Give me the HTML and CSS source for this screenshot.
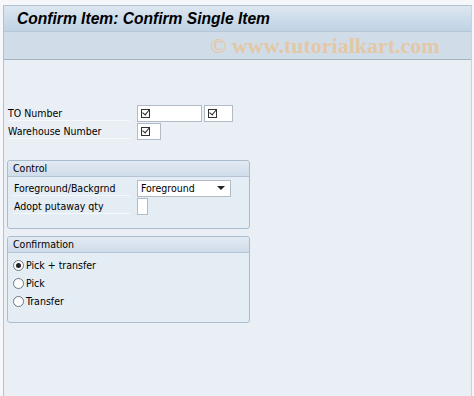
FILE: index.html
```html
<!DOCTYPE html>
<html>
<head>
<meta charset="utf-8">
<link rel="stylesheet" href="styles.css">
</head>
<body>
<div class="window">
  <div class="titlebar">Confirm Item: Confirm Single Item</div>
  <div class="toolbar"><span class="watermark">© www.tutorialkart.com</span></div>
  <div class="content">
    <div class="row">
      <div class="label">TO Number</div>
      <div class="input w64"><span class="chk"></span></div>
      <div class="input w28"><span class="chk"></span></div>
    </div>
    <div class="row">
      <div class="label">Warehouse Number</div>
      <div class="input w23"><span class="chk"></span></div>
    </div>

    <div class="group g1">
      <div class="ghead">Control</div>
      <div class="gbody">
        <div class="row">
          <div class="label glabel">Foreground/Backgrnd</div>
          <div class="select"><span>Foreground</span><span class="arrow"></span></div>
        </div>
        <div class="row">
          <div class="label glabel">Adopt putaway qty</div>
          <div class="input w11"></div>
        </div>
      </div>
    </div>

    <div class="group g2">
      <div class="ghead">Confirmation</div>
      <div class="gbody radios">
        <div class="radio"><span class="dot on"></span>Pick + transfer</div>
        <div class="radio"><span class="dot"></span>Pick</div>
        <div class="radio"><span class="dot"></span>Transfer</div>
      </div>
    </div>
  </div>
</div>
</body>
</html>
```
FILE: styles.css
```css
html, body {
  margin: 0;
  padding: 0;
  background: #f5f7fa;
  font-family: "DejaVu Sans Condensed", "DejaVu Sans", sans-serif;
  font-size: 10.5px;
  color: #000;
}
.window {
  margin: 5px 2px 0 3px;
  height: 391px;
  border-left: 1px solid #b4c1ce;
  border-top: 1px solid #b4c1ce;
  border-right: 1px solid #c8d3de;
  background: #e9eff5;
  display: flex;
  flex-direction: column;
}
.titlebar {
  height: 25px;
  line-height: 25px;
  padding-left: 13px;
  background: linear-gradient(#dde7f1, #bfd2e4);
  font-family: "Liberation Sans", sans-serif;
  font-weight: bold;
  font-style: italic;
  font-size: 15.6px;
  color: #000;
  border-bottom: 1px solid #b7c7d7;
}
.toolbar {
  height: 27px;
  background: #d0dde9;
  border-bottom: 1px solid #a4b2c0;
  display: flex;
  align-items: center;
  padding-left: 206px;
}
.watermark {
  font-family: "Liberation Serif", serif;
  font-weight: bold;
  font-size: 22px;
  color: #e4c7a5;
}
.content {
  padding: 45px 0 0 3px;
  display: flex;
  flex-direction: column;
}
.row {
  display: flex;
  align-items: center;
  height: 16px;
  margin-bottom: 2px;
}
.label {
  width: 123px;
  height: 16px;
  line-height: 16px;
  padding-left: 1px;
  border-bottom: 1px solid #f6f9fc;
  box-sizing: border-box;
  margin-right: 7px;
  white-space: nowrap;
}
.input {
  height: 17px;
  background: #fff;
  border: 1px solid #b1bcc7;
  box-sizing: border-box;
  margin-right: 2px;
  display: flex;
  align-items: center;
  padding-left: 3px;
}
.w64 { width: 65px; }
.w28 { width: 29px; }
.w23 { width: 24px; }
.w11 { width: 11px; padding: 0; }
.chk {
  width: 9px;
  height: 9px;
  border: 1px solid #333;
  box-sizing: border-box;
  position: relative;
}
.chk::after {
  content: "";
  position: absolute;
  left: 2px;
  top: -2px;
  width: 3px;
  height: 6px;
  border-right: 1.5px solid #222;
  border-bottom: 1.5px solid #222;
  transform: rotate(40deg);
}
.group {
  width: 243px;
  border: 1px solid #a9bccf;
  border-radius: 3px;
  background: #e4ecf4;
  box-sizing: border-box;
}
.g1 { margin-top: 19px; height: 69px; }
.g2 { margin-top: 7px; height: 87px; }
.ghead {
  height: 15px;
  line-height: 15px;
  padding-left: 5px;
  background: linear-gradient(#e2eaf3, #cfdcea);
  border-bottom: 1px solid #b3c4d5;
  border-radius: 3px 3px 0 0;
}
.gbody {
  padding: 3px 0 0 5px;
}
.glabel { width: 117px; }
.select {
  width: 94px;
  height: 17px;
  background: #fff;
  border: 1px solid #b1bcc7;
  box-sizing: border-box;
  display: flex;
  align-items: center;
  justify-content: space-between;
  padding: 0 5px 0 3px;
}
.arrow {
  width: 0;
  height: 0;
  border-left: 4px solid transparent;
  border-right: 4px solid transparent;
  border-top: 4px solid #222;
}
.radios {
  padding: 3px 0 0 5px;
}
.radio {
  height: 18px;
  display: flex;
  align-items: center;
}
.dot {
  width: 11px;
  height: 11px;
  border-radius: 50%;
  border: 1px solid #6b7785;
  background: #fff;
  box-sizing: border-box;
  margin-right: 2px;
  display: flex;
  align-items: center;
  justify-content: center;
}
.dot.on::after {
  content: "";
  width: 5px;
  height: 5px;
  border-radius: 50%;
  background: #222;
}
```
